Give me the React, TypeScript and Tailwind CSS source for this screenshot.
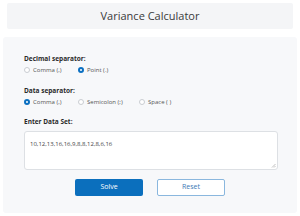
function Radio({ label, checked }: { label: string; checked?: boolean }) {
  return (
    <label className="flex items-center gap-[3px]">
      {checked ? (
        <span className="w-[6px] h-[6px] rounded-full border-[2px] border-[#0b6fc1] bg-white" />
      ) : (
        <span className="w-[6px] h-[6px] rounded-full border border-[#c9cdd2] bg-white" />
      )}
      <span className="text-[6px] leading-[8px] text-[#555]">{label}</span>
    </label>
  )
}

export default function App() {
  return (
    <div className="w-[300px] h-[216px] bg-white font-['Open_Sans',sans-serif] pt-[3px]">
      {/* Header */}
      <div className="mx-[7px] h-[26px] bg-[#f4f5f7] rounded-[2px] flex items-center justify-center">
        <h1 className="text-[11px] text-[#3a3a3a]">Variance Calculator</h1>
      </div>

      {/* Card */}
      <div className="mx-[3px] mt-[8px] h-[176px] bg-[#f7f8fa] rounded-[3px] px-[21px] pt-[17px]">
        <div className="text-[6.5px] font-bold text-[#2a2a2a] leading-[10px]">Decimal separator:</div>
        <div className="flex mt-[2px] h-[8px] items-center">
          <div className="w-[54px]"><Radio label="Comma (,)" /></div>
          <Radio label="Point (.)" checked />
        </div>

        <div className="text-[6.5px] font-bold text-[#2a2a2a] leading-[10px] mt-[12px]">Data separator:</div>
        <div className="flex mt-[2px] h-[8px] items-center">
          <div className="w-[54px]"><Radio label="Comma (,)" checked /></div>
          <div className="w-[61px]"><Radio label="Semicolon (;)" /></div>
          <Radio label="Space ( )" />
        </div>

        <div className="text-[6.5px] font-bold text-[#2a2a2a] leading-[10px] mt-[11px]">Enter Data Set:</div>
        <div className="mt-[4px] relative w-[254px] h-[39px] bg-white border border-[#dde0e4] rounded-[3px] px-[5px] pt-[4px] leading-[9px]">
          <span className="text-[6px] text-[#444]">10,12,13,16,16,9,8,8,12,8,6,16</span>
          <svg className="absolute right-[1px] bottom-[1px]" width="5" height="5" viewBox="0 0 5 5">
            <path d="M4.5 1 L1 4.5 M4.5 3 L3 4.5" stroke="#999" strokeWidth="0.6" />
          </svg>
        </div>

        <div className="flex justify-center gap-[14px] mt-[9px]">
          <button className="w-[68px] h-[17px] bg-[#0b6fbd] text-white text-[7px] rounded-[2px]">Solve</button>
          <button className="w-[68px] h-[17px] bg-white border border-[#8ab7de] text-[#3b78b5] text-[7px] rounded-[2px]">Reset</button>
        </div>
      </div>
    </div>
  )
}
